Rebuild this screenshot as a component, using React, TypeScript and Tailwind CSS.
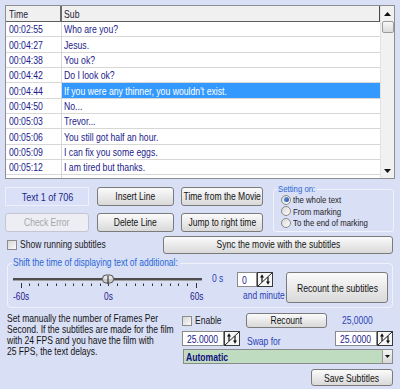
import React from "react";

const rows: [string, string][] = [
  ["00:02:55", "Who are you?"],
  ["00:04:27", "Jesus."],
  ["00:04:38", "You ok?"],
  ["00:04:42", "Do I look ok?"],
  ["00:04:44", "If you were any thinner, you wouldn't exist."],
  ["00:04:50", "No..."],
  ["00:05:03", "Trevor..."],
  ["00:05:06", "You still got half an hour."],
  ["00:05:09", "I can fix you some eggs."],
  ["00:05:12", "I am tired but thanks."],
  ["", ""],
];

/* Narrow text: the UI font is a condensed face, drawn as Arial squeezed horizontally */
function T({
  children,
  className = "",
  center = false,
}: {
  children: React.ReactNode;
  className?: string;
  center?: boolean;
}) {
  return (
    <span
      className={
        "inline-block whitespace-nowrap scale-x-[0.82] " +
        (center ? "origin-center " : "origin-left ") +
        className
      }
    >
      {children}
    </span>
  );
}

function Btn({
  children,
  className = "",
  disabled = false,
}: {
  children: React.ReactNode;
  className?: string;
  disabled?: boolean;
}) {
  return (
    <div
      className={
        "flex items-center justify-center rounded-[3px] border leading-[12px] " +
        (disabled
          ? "border-[#c3c6d0] bg-[#eceef4] text-[#a6a6a6] "
          : "border-[#7b7b7b] bg-linear-to-b from-[#fbfbfb] to-[#d9d9d9] text-[#141414] ") +
        className
      }
    >
      <T center>{children}</T>
    </div>
  );
}

function SpinIcon() {
  return (
    <svg width="16" height="15" viewBox="0 0 16 15" className="shrink-0">
      <rect x="0.5" y="0.5" width="15" height="14" fill="#f6f6f6" stroke="#3a3a3a" />
      <line x1="1" y1="14" x2="15" y2="1" stroke="#222" strokeWidth="1" />
      <path d="M5 10V4.5" stroke="#111" strokeWidth="1.2" />
      <path d="M3 5.5L5 2.3L7 5.5Z" fill="#111" />
      <path d="M11 5V10.5" stroke="#111" strokeWidth="1.2" />
      <path d="M9 9.5L11 12.7L13 9.5Z" fill="#111" />
    </svg>
  );
}

function Spin({ value, className = "" }: { value: string; className?: string }) {
  return (
    <div className={"flex h-[15px] " + className}>
      <div className="flex-1 flex items-center bg-white border border-[#8a8a8a] pl-[4px] text-[10.5px] leading-[12px] text-[#1b1b8c] overflow-hidden">
        <T>{value}</T>
      </div>
      <SpinIcon />
    </div>
  );
}

function Check() {
  return (
    <div className="w-[10px] h-[10px] border border-[#8c8c8c] bg-linear-to-br from-[#d6d6d6] to-[#fbfbfb] shrink-0" />
  );
}

function Radio({ checked = false, label }: { checked?: boolean; label: string }) {
  return (
    <div className="flex items-center h-[11.5px]">
      <div className="w-[10px] h-[10px] rounded-full border border-[#8a8a8a] bg-linear-to-br from-[#d8d8d8] to-[#fdfdfd] flex items-center justify-center shrink-0">
        {checked && (
          <div className="w-[5px] h-[5px] rounded-full bg-linear-to-br from-[#6fa0e0] to-[#1c4f9c]" />
        )}
      </div>
      <T className="ml-[2px] text-[9.5px] leading-[11px] text-[#1e1e1e]">{label}</T>
    </div>
  );
}

function Slider() {
  const ticks = Array.from({ length: 21 }, (_, i) => 7.7 + i * 8.765);
  return (
    <svg width="193" height="17" viewBox="0 0 193 17">
      <line x1="0" y1="7" x2="189" y2="7" stroke="#4d4d4d" strokeWidth="2" />
      <line x1="0" y1="8.5" x2="189" y2="8.5" stroke="#a0a0a0" strokeWidth="1" />
      {ticks.map((x, i) => (
        <line
          key={i}
          x1={Math.round(x) + 0.5}
          x2={Math.round(x) + 0.5}
          y1={i === 0 || i === 20 ? 11 : 11.5}
          y2={i === 0 || i === 20 ? 16 : 14}
          stroke="#333"
          strokeWidth="1"
        />
      ))}
      <rect x="89.5" y="3" width="11" height="8" rx="3.5" fill="#c9c9c9" stroke="#5a5a5a" />
      <rect x="91" y="4" width="8" height="3" rx="1.5" fill="#e8e8e8" />
      <line x1="95" y1="4" x2="95" y2="12" stroke="#3a3a3a" strokeWidth="1.2" />
    </svg>
  );
}

export default function App() {
  return (
    <div className="w-[400px] h-[389px] overflow-hidden bg-[#d9dff5] [font-family:'Liberation_Sans',Arial,sans-serif] text-[10.5px] leading-[12px] flex flex-col">
      {/* Grid */}
      <div className="ml-[5px] mt-[5px] w-[390px] h-[174px] shrink-0 border border-[#8e8e8e] bg-white flex">
        <div className="w-[374px] flex flex-col overflow-hidden">
          <div className="h-[16px] shrink-0 flex bg-[#f0f0f0] border-b border-[#5f5f5f] border-r border-r-[#4a4a4a] text-[#1d1d3a] text-[10.6px]">
            <div className="w-[56px] border-r-2 border-[#6a6a6a] pl-[3px] flex items-center">
              <T>Time</T>
            </div>
            <div className="flex-1 pl-[2px] flex items-center">
              <T>Sub</T>
            </div>
          </div>
          {rows.map(([t, s], i) => {
            const sel = i === 4;
            return (
              <div key={i} className="h-[15.35px] shrink-0 flex border-b border-[#d7d7d7] text-[10.6px]">
                <div className="w-[56px] border-r border-[#d7d7d7] pl-[3px] flex items-center text-[#1b1b8c]">
                  <T>{t}</T>
                </div>
                <div
                  className={
                    "flex-1 pl-[2px] flex items-center " +
                    (sel ? "bg-[#3399ff] text-white" : "text-[#1b1b8c]")
                  }
                >
                  <T>{s}</T>
                </div>
              </div>
            );
          })}
        </div>
        <div className="w-[14px] bg-[#f1f1f1] border-l border-[#e2e2e2] flex flex-col">
          <div className="h-[15px] flex items-center justify-center">
            <svg width="7" height="4" viewBox="0 0 7 4">
              <path d="M0 4L3.5 0L7 4Z" fill="#111" />
            </svg>
          </div>
          <div className="h-[12px] mx-[0.5px] rounded-[2px] border border-[#9c9c9c] bg-linear-to-b from-[#f7f7f7] to-[#dcdcdc]" />
          <div className="flex-1" />
          <div className="h-[15px] flex items-center justify-center">
            <svg width="7" height="4" viewBox="0 0 7 4">
              <path d="M0 0L3.5 4L7 0Z" fill="#111" />
            </svg>
          </div>
        </div>
      </div>

      {/* Middle buttons */}
      <div className="flex mt-[8px] ml-[5px] text-[10.4px]">
        <div className="w-[84px] flex flex-col gap-[7px]">
          <div className="h-[19px] border border-[#eef1fb] bg-[#dae0f7] text-[#1b2a8c] text-[11px] flex items-center justify-center">
            <T center>Text 1 of 706</T>
          </div>
          <Btn disabled className="h-[19px]">
            Check Error
          </Btn>
        </div>
        <div className="w-[77px] ml-[8px] flex flex-col gap-[7px]">
          <Btn className="h-[19px]">Insert Line</Btn>
          <Btn className="h-[19px]">Delete Line</Btn>
        </div>
        <div className="w-[82px] ml-[7px] flex flex-col gap-[7px]">
          <Btn className="h-[19px]">Time from the Movie</Btn>
          <Btn className="h-[19px]">Jump to right time</Btn>
        </div>
        <div className="relative w-[121px] h-[43px] ml-[10px] mt-[2px] border border-[#f1f3fb] rounded-[3px] pt-[4px] pl-[7px]">
          <span className="absolute top-[-7px] left-[3px] px-[1px] bg-[#d9dff5] text-[#2a68d6] text-[9.5px] leading-[12px] w-[40px] overflow-hidden">
            <T>Setting on:</T>
          </span>
          <Radio checked label="the whole text" />
          <Radio label="From marking" />
          <Radio label="To the end of marking" />
        </div>
      </div>

      {/* Show running / Sync */}
      <div className="flex mt-[4px] h-[18px]">
        <div className="ml-[7px] flex items-center w-[156px]">
          <Check />
          <T className="ml-[3px] text-[10.4px] text-[#1a1a1a]">Show running subtitles</T>
        </div>
        <Btn className="w-[230px] h-[18px] text-[10.4px]">Sync the movie with the subtitles</Btn>
      </div>

      {/* Shift group */}
      <div className="relative ml-[7px] mt-[9px] w-[386px] h-[45px] border border-[#f1f3fb] rounded-[4px] flex pt-[8px] pl-[5px]">
        <span className="absolute top-[-7px] left-[4px] px-[1px] bg-[#d9dff5] text-[#2a68d6] text-[10.3px] leading-[12px] w-[168px] overflow-hidden">
          <T>Shift the time of displaying text of additional:</T>
        </span>
        <div className="w-[193px] flex flex-col">
          <Slider />
          <div className="flex mt-[2px] text-[10.2px] leading-[12px] text-[#1b1b8c]">
            <div className="w-[93px]">
              <T>-60s</T>
            </div>
            <div className="w-[87px]">
              <T>0s</T>
            </div>
            <div>
              <T>60s</T>
            </div>
          </div>
        </div>
        <div className="ml-[6px] w-[25px] text-[10.4px] leading-[14px] text-[#2a3fb5]">
          <T>0 s</T>
        </div>
        <div className="w-[49px] flex flex-col">
          <Spin value="0" className="w-[36px]" />
          <div className="mt-[3px] pl-[6px] text-[10.3px] leading-[12px] text-[#2a3fb5]">
            <T>and minute</T>
          </div>
        </div>
        <Btn className="w-[102px] h-[31px] text-[10.6px]">Recount the subtitles</Btn>
      </div>

      {/* Bottom */}
      <div className="flex mt-[5px]">
        <div className="ml-[7px] w-[175px] pt-[1px] text-[10.4px] leading-[10.9px] text-[#141414] flex flex-col">
          <T>Set manually the number of Frames Per</T>
          <T>Second. If the subtitles are made for the film</T>
          <T>with 24 FPS and you have the film with</T>
          <T>25 FPS, the text delays.</T>
        </div>
        <div className="w-[211px] flex flex-col">
          <div className="h-[15px] flex items-center">
            <div className="w-[64px] flex items-center">
              <Check />
              <T className="ml-[3px] text-[10.4px] text-[#1a1a1a]">Enable</T>
            </div>
            <Btn className="w-[81px] h-[15px] text-[10.4px]">Recount</Btn>
            <T className="ml-[15px] text-[10.4px] text-[#2a3fb5]">25,0000</T>
          </div>
          <div className="flex items-start mt-[3px] h-[15px]">
            <Spin value="25.0000" className="w-[58px]" />
            <T className="ml-[7px] mt-[5px] text-[10.4px] text-[#2a3fb5]">Swap for</T>
            <Spin value="25.0000" className="ml-auto w-[58px]" />
          </div>
          <div className="mt-[3px] ml-[1px] w-[210px] h-[15px] flex border border-[#8a8a8a] bg-[#c0dcc0]">
            <div className="flex-1 pl-[2px] flex items-center font-bold text-[10.5px] text-[#101080]">
              <T>Automatic</T>
            </div>
            <div className="w-[10px] bg-linear-to-b from-[#f4f4f4] to-[#d8d8d8] border-l border-[#9a9a9a] flex items-center justify-center">
              <svg width="5" height="3" viewBox="0 0 5 3">
                <path d="M0 0L2.5 3L5 0Z" fill="#111" />
              </svg>
            </div>
          </div>
          <Btn className="mt-[5px] self-end w-[82px] h-[17px] text-[10.5px]">Save Subtitles</Btn>
        </div>
      </div>
    </div>
  );
}
